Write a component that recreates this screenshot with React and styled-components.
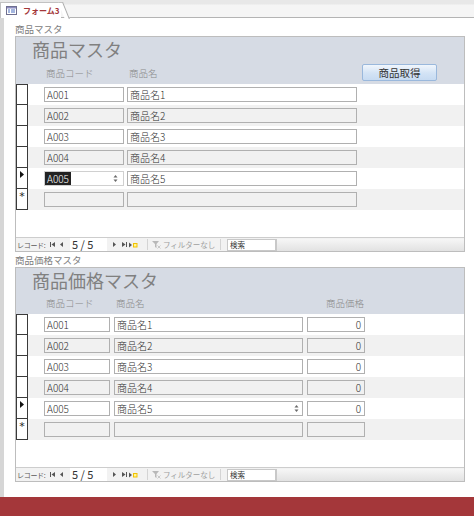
import React from 'react';
import styled, { createGlobalStyle } from 'styled-components';

const GlobalStyle = createGlobalStyle`
  html, body {
    margin: 0;
    padding: 0;
    background: #fff;
  }
  body {
    font-family: "Noto Sans CJK JP", "Noto Sans", sans-serif;
    color: #262626;
  }
`;

// data for both subforms
const products = [1, 2, 3, 4, 5].map((n) => ({
  code: `A00${n}`,
  name: `商品名${n}`,
  price: '0',
}));
const rows = [...products.map((p, i) => ({ ...p, current: i === 4 })), { isNew: true }];

const productColumns = [
  { key: 'code', label: '商品コード', w: 80, ml: 16 },
  { key: 'name', label: '商品名', w: 230, ml: 3 },
];

const priceColumns = [
  { key: 'code', label: '商品コード', w: 66, ml: 16 },
  { key: 'name', label: '商品名', w: 189, ml: 4 },
  { key: 'price', label: '商品価格', w: 58, ml: 4, align: 'right' },
];

const App = () => (
  <Page>
    <GlobalStyle />
    <TabStrip>
      <Tab>
        <FormIcon />
        フォーム3
      </Tab>
    </TabStrip>
    <Body>
      <Rail />
      <Content>
        <Subform
          caption="商品マスタ"
          title="商品マスタ"
          headerHeight={47}
          columns={productColumns}
          action="商品取得"
          selectOn="code"
          spinnerOn="code"
          spinnerRight={5}
        />
        <Subform
          caption="商品価格マスタ"
          title="商品価格マスタ"
          headerHeight={46}
          columns={priceColumns}
          spinnerOn="name"
          spinnerRight={3}
          second
        />
      </Content>
    </Body>
    <StatusBar />
  </Page>
);

const Subform = ({ caption, title, headerHeight, columns, action, selectOn, spinnerOn, spinnerRight, second }) => (
  <>
    <Caption $second={second}>{caption}</Caption>
    <Frame>
      <Header $h={headerHeight}>
        <Title>{title}</Title>
        <LabelRow>
          <SelectorGap />
          {columns.map((c) => (
            <ColLabel key={c.key} $w={c.w} $ml={c.ml} $align={c.align}>
              {c.label}
            </ColLabel>
          ))}
          {action && <ActionButton>{action}</ActionButton>}
        </LabelRow>
      </Header>
      {rows.map((r, i) => (
        <Row key={i} $alt={i % 2 === 1}>
          <Selector $first={i === 0}>
            {r.current && <CurrentMark />}
            {r.isNew && <NewMark>*</NewMark>}
          </Selector>
          {columns.map((c) => (
            <Field key={c.key} $w={c.w} $ml={c.ml} $align={c.align} $focus={r.current && c.key === selectOn}>
              {!r.isNew && (r.current && c.key === selectOn ? <Selected>{r[c.key]}</Selected> : r[c.key])}
              {r.current && c.key === spinnerOn && <Spinner right={spinnerRight} />}
            </Field>
          ))}
        </Row>
      ))}
      <Filler />
      <NavBar />
    </Frame>
  </>
);

const NavBar = () => (
  <Nav>
    <NavLead>
      <NavText>レコード:</NavText>
      <NavBtn $w={9}>
        <svg width="5" height="5" viewBox="0 0 5 5">
          <rect x="0" y="0" width="1" height="5" fill="#555" />
          <path d="M5 0 L1.5 2.5 L5 5 Z" fill="#555" />
        </svg>
      </NavBtn>
      <NavBtn $w={9}>
        <svg width="3" height="5" viewBox="0 0 3 5">
          <path d="M3 0 L0 2.5 L3 5 Z" fill="#555" />
        </svg>
      </NavBtn>
      <RecordBox>5 / 5</RecordBox>
      <NavBtn $w={14}>
        <svg width="3" height="5" viewBox="0 0 3 5">
          <path d="M0 0 L3 2.5 L0 5 Z" fill="#555" />
        </svg>
      </NavBtn>
      <NavBtn $w={7}>
        <svg width="5" height="5" viewBox="0 0 5 5">
          <path d="M0 0 L3.5 2.5 L0 5 Z" fill="#555" />
          <rect x="4" y="0" width="1" height="5" fill="#555" />
        </svg>
      </NavBtn>
      <NavBtn $w={11}>
        <svg width="9" height="6" viewBox="0 0 9 6">
          <path d="M0 0.5 L3 3 L0 5.5 Z" fill="#555" />
          <rect x="4" y="1" width="4.5" height="4.5" fill="#f2c200" />
          <rect x="5" y="2" width="2.5" height="2.5" fill="#fff59a" />
        </svg>
      </NavBtn>
      <NavSep $ml={8} />
      <FilterState>
        <svg width="9" height="8" viewBox="0 0 9 8">
          <path d="M0 0 H7 L4.5 3 V7 L3 6 V3 Z" fill="#b8b8b8" />
          <path d="M5.5 4.5 L8.5 7.5 M8.5 4.5 L5.5 7.5" stroke="#c8c8c8" strokeWidth="1" />
        </svg>
        フィルターなし
      </FilterState>
      <NavSep $ml={0} />
      <SearchBox>検索</SearchBox>
    </NavLead>
    <NavRest />
  </Nav>
);

const FormIcon = () => (
  <svg width="11" height="9" viewBox="0 0 11 9">
    <rect x="0.5" y="0.5" width="10" height="8" fill="#fff" stroke="#6f6f8f" />
    <rect x="1" y="1" width="9" height="1.5" fill="#8c8cc0" />
    <rect x="2" y="3.5" width="2" height="1" fill="#4a6fc0" />
    <rect x="5" y="3.5" width="4" height="1" fill="#4a6fc0" />
    <rect x="2" y="5.5" width="2" height="1" fill="#4a6fc0" />
    <rect x="5" y="5.5" width="4" height="1" fill="#4a6fc0" />
  </svg>
);

const CurrentMark = () => (
  <svg width="4" height="7" viewBox="0 0 4 7">
    <path d="M0 0 L4 3.5 L0 7 Z" fill="#111" />
  </svg>
);

const Spinner = ({ right }) => (
  <SpinnerBox $right={right}>
    <svg width="5" height="9" viewBox="0 0 5 9">
      <path d="M0.5 3.5 L2.5 1 L4.5 3.5 Z" fill="#6a6a6a" />
      <path d="M0.5 5.5 L2.5 8 L4.5 5.5 Z" fill="#6a6a6a" />
    </svg>
  </SpinnerBox>
);

const Page = styled.div`
  width: 474px;
  height: 516px;
  display: flex;
  flex-direction: column;
  overflow: hidden;
  background: #fff;
`;

const TabStrip = styled.div`
  height: 18px;
  flex: none;
  box-sizing: border-box;
  display: flex;
  align-items: flex-end;
  background: linear-gradient(#e8e8e8 0, #e8e8e8 4px, #f5f5f5 5px, #f5f5f5 100%);
  border-bottom: 1px solid #b4b4b4;
`;

const Tab = styled.div`
  position: relative;
  height: 16px;
  margin-bottom: -1px;
  box-sizing: border-box;
  padding: 0 2px 0 5px;
  display: flex;
  align-items: center;
  gap: 6px;
  background: #fff;
  border-top: 1px solid #c2c2c2;
  border-left: 1px solid #c2c2c2;
  font-size: 8px;
  font-weight: bold;
  color: #a4373a;
  white-space: nowrap;

  &::after {
    content: '';
    position: absolute;
    top: -1px;
    left: calc(100% - 3px);
    width: 4px;
    height: 16px;
    background: #fff;
    border-top: 1px solid #c2c2c2;
    border-right: 1px solid #a8a8a8;
    transform-origin: top left;
    transform: skewX(22deg);
  }
`;

const Body = styled.div`
  flex: 1;
  display: flex;
  min-height: 0;
`;

const Rail = styled.div`
  width: 4px;
  flex: none;
  background: #d6d6d6;
`;

const Content = styled.div`
  flex: 1;
  padding: 5px 9px 0 11px;
  display: flex;
  flex-direction: column;
`;

const Caption = styled.div`
  height: ${(p) => (p.$second ? 15 : 13)}px;
  line-height: ${(p) => (p.$second ? 16 : 13)}px;
  font-size: 9.5px;
  color: #7c7c7c;
  white-space: nowrap;
`;

const Frame = styled.div`
  border: 1px solid #bdbdbd;
  display: flex;
  flex-direction: column;
  background: #fff;
`;

const Header = styled.div`
  height: ${(p) => p.$h}px;
  background: #d6dbe4;
  display: flex;
  flex-direction: column;
`;

const Title = styled.div`
  height: 24px;
  line-height: 24px;
  padding-left: 16px;
  font-size: 18px;
  color: #808080;
  white-space: nowrap;
`;

const LabelRow = styled.div`
  flex: 1;
  display: flex;
  align-items: center;
`;

const SelectorGap = styled.div`
  width: 12px;
  flex: none;
`;

const ColLabel = styled.div`
  width: ${(p) => p.$w}px;
  margin-left: ${(p) => p.$ml}px;
  flex: none;
  box-sizing: border-box;
  padding: 0 1px 0 2px;
  font-size: 9.5px;
  font-weight: 300;
  color: #8a8a8a;
  text-align: ${(p) => p.$align || 'left'};
  white-space: nowrap;
`;

const ActionButton = styled.div`
  width: 75px;
  height: 17px;
  margin-left: 5px;
  box-sizing: border-box;
  border: 1px solid #9ab8dc;
  border-radius: 2px;
  background: linear-gradient(#f1f6fc, #d3e3f5 55%, #c7dbf2);
  display: flex;
  align-items: center;
  justify-content: center;
  font-size: 10.5px;
  color: #333;
`;

const Row = styled.div`
  height: 21px;
  display: flex;
  align-items: center;
  background: ${(p) => (p.$alt ? '#f1f1f1' : '#fff')};
`;

const Selector = styled.div`
  width: 12px;
  align-self: stretch;
  flex: none;
  box-sizing: border-box;
  border: 1px solid #3a3a3a;
  border-top: ${(p) => (p.$first ? '1px solid #3a3a3a' : 'none')};
  background: #fff;
  display: flex;
  justify-content: center;
  align-items: flex-start;
  padding-top: 3px;
`;

const NewMark = styled.span`
  font-size: 11px;
  line-height: 9px;
  color: #222;
  font-family: "DejaVu Sans", sans-serif;
`;

const Field = styled.div`
  position: relative;
  width: ${(p) => p.$w}px;
  margin-left: ${(p) => p.$ml}px;
  height: 15px;
  flex: none;
  box-sizing: border-box;
  border: 1px solid ${(p) => (p.$focus ? '#d0d0d0' : '#b0b0b0')};
  padding: 0 3px 0 2px;
  font-size: 10px;
  font-weight: 300;
  line-height: 13px;
  color: #2e2e2e;
  text-align: ${(p) => p.$align || 'left'};
  white-space: nowrap;
  overflow: hidden;
`;

const Selected = styled.span`
  display: inline-block;
  margin-left: -2px;
  padding: 0 2px;
  background: #222;
  color: #fff;
`;

const SpinnerBox = styled.span`
  position: absolute;
  right: ${(p) => p.$right}px;
  top: 2px;
  display: flex;
`;

const Filler = styled.div`
  height: 27px;
  background: #fff;
`;

const Nav = styled.div`
  height: 14px;
  display: flex;
  border-top: 1px solid #cdcdcd;
  box-sizing: border-box;
  background: #f2f2f2;
`;

const NavLead = styled.div`
  display: flex;
  align-items: center;
`;

const NavText = styled.div`
  width: 31px;
  margin-left: 1px;
  font-size: 7px;
  letter-spacing: -0.3px;
  color: #5a5a5a;
  white-space: nowrap;
  overflow: hidden;
`;

const NavBtn = styled.div`
  width: ${(p) => p.$w}px;
  display: flex;
  justify-content: center;
  align-items: center;
`;

const RecordBox = styled.div`
  width: 37px;
  height: 13px;
  margin-left: 4px;
  background: #fff;
  font-size: 11px;
  line-height: 13px;
  padding-left: 2px;
  box-sizing: border-box;
  color: #333;
  white-space: nowrap;
`;

const NavSep = styled.div`
  width: 1px;
  height: 11px;
  margin-left: ${(p) => p.$ml}px;
  background: #d4d4d4;
`;

const FilterState = styled.div`
  width: 68px;
  margin-left: 4px;
  display: flex;
  align-items: center;
  gap: 2px;
  font-size: 7.5px;
  color: #a0a0a0;
  white-space: nowrap;
`;

const SearchBox = styled.div`
  width: 49px;
  height: 12px;
  margin-left: 6px;
  box-sizing: border-box;
  border: 1px solid #c8c8c8;
  background: #fff;
  font-size: 7.5px;
  line-height: 10px;
  padding-left: 2px;
  color: #333;
`;

const NavRest = styled.div`
  flex: 1;
  margin-top: 1px;
  border-left: 1px solid #c8c8c8;
  background: linear-gradient(#f6f6f6, #e2e2e2);
`;

const StatusBar = styled.div`
  height: 19px;
  flex: none;
  background: #a4373a;
`;

export default App;
